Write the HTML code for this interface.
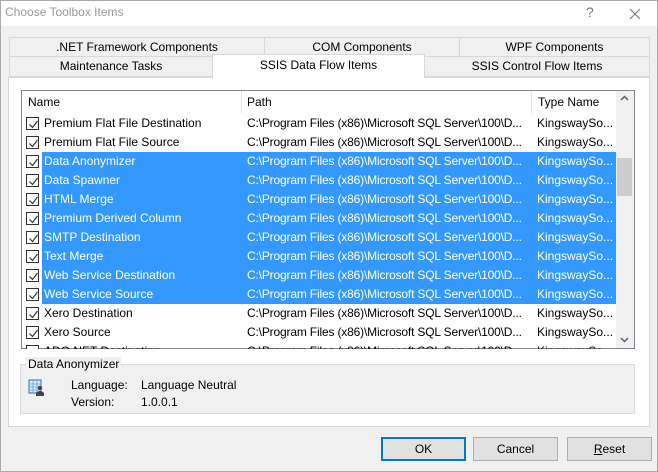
<!DOCTYPE html>
<html><head><style>
*{margin:0;padding:0;box-sizing:border-box}
body{width:658px;height:472px;background:#f0f0f0;font-family:"Liberation Sans",sans-serif;font-size:12px;color:#000;position:relative;overflow:hidden}
.a{position:absolute;white-space:nowrap}
.win{position:absolute;left:0;top:0;width:658px;height:472px;border:1px solid #aaa}
.title{position:absolute;left:1px;top:1px;width:656px;height:25px;background:#fff}
.tab{position:absolute;background:#f0f0f0;border:1px solid #d9d9d9;text-align:center;line-height:19px}
.row{position:absolute;left:22px;width:594px;height:19px;line-height:19px}
.row .cb{position:absolute;left:4px;top:3px;width:13px;height:13px;border:1px solid #333;background:#fff}
.row .cb svg{position:absolute;left:1px;top:1px}
.row .n{position:absolute;left:22px}
.row .p{position:absolute;left:225px;letter-spacing:-0.17px}
.row .t{position:absolute;left:515px}
.sel .hl{position:absolute;left:20px;top:0;width:574px;height:19px;background:#3399ff}
.sel .n,.sel .p,.sel .t{color:#fff}
.btn{position:absolute;top:437px;height:24px;border:1px solid #adadad;background:#e1e1e1;text-align:center;line-height:22px}
</style></head><body>
<div class="win"></div>
<div class="title"></div>
<div class="a" style="left:5px;top:5px;color:#999;font-size:12px">Choose Toolbox Items</div>
<div class="a" style="left:586px;top:4px;color:#777;font-size:14px">?</div>
<svg class="a" style="left:629px;top:8px" width="12" height="12"><path d="M1 1L11 11M11 1L1 11" stroke="#777" stroke-width="1.1"/></svg>

<div class="tab" style="left:9px;top:37px;width:256px;height:20px">.NET Framework Components</div>
<div class="tab" style="left:264px;top:37px;width:196px;height:20px">COM Components</div>
<div class="tab" style="left:459px;top:37px;width:191px;height:20px">WPF Components</div>
<div class="tab" style="left:9px;top:56px;width:204px;height:21px">Maintenance Tasks</div>
<div class="tab" style="left:424px;top:56px;width:226px;height:21px">SSIS Control Flow Items</div>
<div class="a" style="left:8px;top:77px;width:642px;height:350px;background:#fff;border:1px solid #d9d9d9"></div>
<div class="tab" style="left:212px;top:54px;width:213px;height:24px;background:#fff;border-bottom:none;line-height:21px">SSIS Data Flow Items</div>

<div class="a" style="left:21px;top:90px;width:614px;height:259px;border:1px solid #828790;background:#fff"></div>
<div class="a" style="left:22px;top:91px;width:594px;height:22px;background:#fff"></div>
<div class="a" style="left:28px;top:95px">Name</div>
<div class="a" style="left:241px;top:91px;width:1px;height:22px;background:#e5e5e5"></div>
<div class="a" style="left:247px;top:95px">Path</div>
<div class="a" style="left:531px;top:91px;width:1px;height:22px;background:#e5e5e5"></div>
<div class="a" style="left:538px;top:95px">Type Name</div>
<div class="a" style="left:616px;top:91px;width:18px;height:257px;background:#f0f0f0"></div>
<div class="a" style="left:617px;top:158px;width:15px;height:38px;background:#cdcdcd"></div>
<svg class="a" style="left:620px;top:95px" width="9" height="6"><path d="M1 5L4.5 1.5L8 5" stroke="#606060" stroke-width="1.5" fill="none"/></svg>
<svg class="a" style="left:620px;top:337px" width="9" height="6"><path d="M1 1L4.5 4.5L8 1" stroke="#606060" stroke-width="1.5" fill="none"/></svg>

<div style="position:absolute;left:0;top:0;width:616px;height:349px;overflow:hidden">
<div class="row" style="top:114px"><div class="cb"><svg width="11" height="11"><path d="M1.5 5.5L4.5 8.5L9.5 2" stroke="#333" stroke-width="1.2" fill="none"/></svg></div><span class="n">Premium Flat File Destination</span><span class="p">C:\Program Files (x86)\Microsoft SQL Server\100\D...</span><span class="t">KingswaySo...</span></div>
<div class="row" style="top:133px"><div class="cb"><svg width="11" height="11"><path d="M1.5 5.5L4.5 8.5L9.5 2" stroke="#333" stroke-width="1.2" fill="none"/></svg></div><span class="n">Premium Flat File Source</span><span class="p">C:\Program Files (x86)\Microsoft SQL Server\100\D...</span><span class="t">KingswaySo...</span></div>
<div class="row sel" style="top:152px"><div class="hl"></div><div class="cb"><svg width="11" height="11"><path d="M1.5 5.5L4.5 8.5L9.5 2" stroke="#333" stroke-width="1.2" fill="none"/></svg></div><span class="n">Data Anonymizer</span><span class="p">C:\Program Files (x86)\Microsoft SQL Server\100\D...</span><span class="t">KingswaySo...</span></div>
<div class="row sel" style="top:171px"><div class="hl"></div><div class="cb"><svg width="11" height="11"><path d="M1.5 5.5L4.5 8.5L9.5 2" stroke="#333" stroke-width="1.2" fill="none"/></svg></div><span class="n">Data Spawner</span><span class="p">C:\Program Files (x86)\Microsoft SQL Server\100\D...</span><span class="t">KingswaySo...</span></div>
<div class="row sel" style="top:190px"><div class="hl"></div><div class="cb"><svg width="11" height="11"><path d="M1.5 5.5L4.5 8.5L9.5 2" stroke="#333" stroke-width="1.2" fill="none"/></svg></div><span class="n">HTML Merge</span><span class="p">C:\Program Files (x86)\Microsoft SQL Server\100\D...</span><span class="t">KingswaySo...</span></div>
<div class="row sel" style="top:209px"><div class="hl"></div><div class="cb"><svg width="11" height="11"><path d="M1.5 5.5L4.5 8.5L9.5 2" stroke="#333" stroke-width="1.2" fill="none"/></svg></div><span class="n">Premium Derived Column</span><span class="p">C:\Program Files (x86)\Microsoft SQL Server\100\D...</span><span class="t">KingswaySo...</span></div>
<div class="row sel" style="top:228px"><div class="hl"></div><div class="cb"><svg width="11" height="11"><path d="M1.5 5.5L4.5 8.5L9.5 2" stroke="#333" stroke-width="1.2" fill="none"/></svg></div><span class="n">SMTP Destination</span><span class="p">C:\Program Files (x86)\Microsoft SQL Server\100\D...</span><span class="t">KingswaySo...</span></div>
<div class="row sel" style="top:247px"><div class="hl"></div><div class="cb"><svg width="11" height="11"><path d="M1.5 5.5L4.5 8.5L9.5 2" stroke="#333" stroke-width="1.2" fill="none"/></svg></div><span class="n">Text Merge</span><span class="p">C:\Program Files (x86)\Microsoft SQL Server\100\D...</span><span class="t">KingswaySo...</span></div>
<div class="row sel" style="top:266px"><div class="hl"></div><div class="cb"><svg width="11" height="11"><path d="M1.5 5.5L4.5 8.5L9.5 2" stroke="#333" stroke-width="1.2" fill="none"/></svg></div><span class="n">Web Service Destination</span><span class="p">C:\Program Files (x86)\Microsoft SQL Server\100\D...</span><span class="t">KingswaySo...</span></div>
<div class="row sel" style="top:285px"><div class="hl" style="outline:1px dotted #c07030;outline-offset:-1px"></div><div class="cb"><svg width="11" height="11"><path d="M1.5 5.5L4.5 8.5L9.5 2" stroke="#333" stroke-width="1.2" fill="none"/></svg></div><span class="n">Web Service Source</span><span class="p">C:\Program Files (x86)\Microsoft SQL Server\100\D...</span><span class="t">KingswaySo...</span></div>
<div class="row" style="top:304px"><div class="cb"><svg width="11" height="11"><path d="M1.5 5.5L4.5 8.5L9.5 2" stroke="#333" stroke-width="1.2" fill="none"/></svg></div><span class="n">Xero Destination</span><span class="p">C:\Program Files (x86)\Microsoft SQL Server\100\D...</span><span class="t">KingswaySo...</span></div>
<div class="row" style="top:323px"><div class="cb"><svg width="11" height="11"><path d="M1.5 5.5L4.5 8.5L9.5 2" stroke="#333" stroke-width="1.2" fill="none"/></svg></div><span class="n">Xero Source</span><span class="p">C:\Program Files (x86)\Microsoft SQL Server\100\D...</span><span class="t">KingswaySo...</span></div>
<div class="row" style="top:342px"><div class="cb"></div><span class="n">ADO NET Destination</span><span class="p">C:\Program Files (x86)\Microsoft SQL Server\100\D...</span><span class="t">KingswaySo...</span></div>
</div>

<div class="a" style="left:20px;top:364px;width:615px;height:50px;border:1px solid #dcdcdc;background:#f0f0f0"></div>
<div class="a" style="left:26px;top:357px;background:#f0f0f0;padding:0 2px">Data Anonymizer</div>
<svg class="a" style="left:28px;top:379px" width="18" height="18"><rect x="1" y="1" width="12" height="13" fill="#dbe8f5" stroke="#2a6db5"/><path d="M2 5H12M2 8H12M2 11H12M5 2V14M9 2V14" stroke="#6aa0d8" stroke-width="0.8"/><circle cx="12" cy="9" r="2.2" fill="#444"/><path d="M8 17V14Q12 10 16 14V17Z" fill="#444"/></svg>
<div class="a" style="left:71px;top:378px">Language:</div>
<div class="a" style="left:141px;top:378px">Language Neutral</div>
<div class="a" style="left:71px;top:395px">Version:</div>
<div class="a" style="left:141px;top:395px">1.0.0.1</div>

<div class="btn" style="left:381px;width:85px;border:2px solid #0078d7;line-height:20px">OK</div>
<div class="btn" style="left:473px;width:85px">Cancel</div>
<div class="btn" style="left:567px;width:85px"><u>R</u>eset</div>
</body></html>
